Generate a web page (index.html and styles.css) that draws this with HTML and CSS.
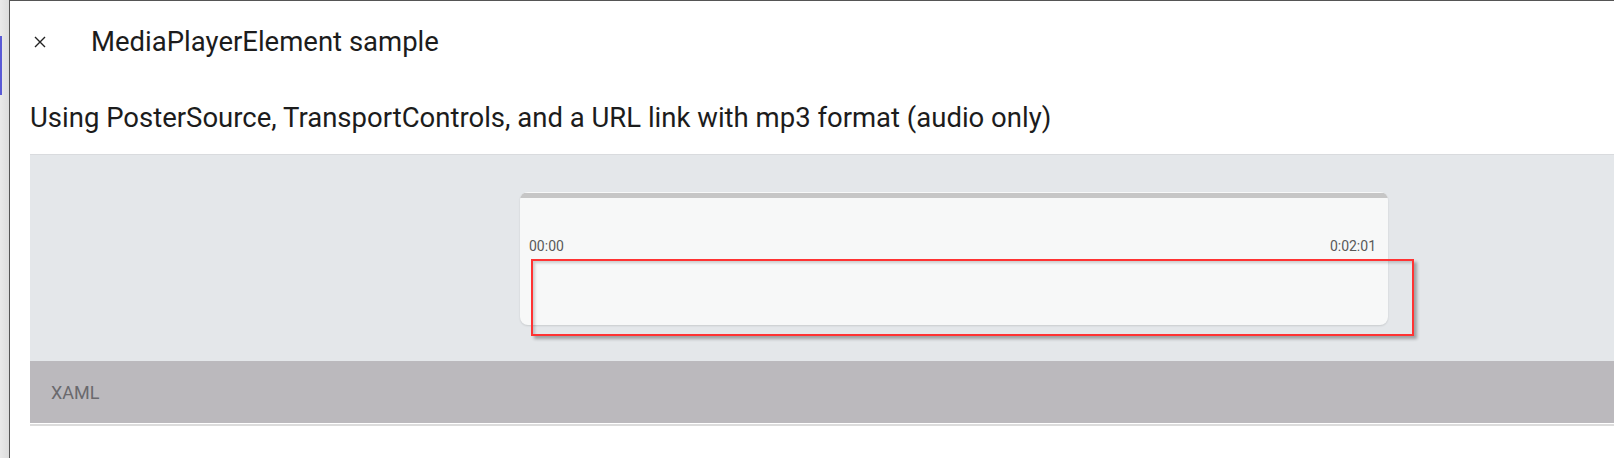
FILE: index.html
```html
<!DOCTYPE html>
<html lang="en">
<head>
<meta charset="utf-8">
<title>MediaPlayerElement sample</title>
<link rel="stylesheet" href="styles.css">
</head>
<body>
<div class="app">
  <aside class="rail"><div class="rail-mark"></div></aside>
  <main class="window">
    <header class="titlebar">
      <button class="close" aria-label="Close">
        <svg width="12" height="12" viewBox="0 0 12 12"><path d="M1 1 L11 11 M11 1 L1 11" stroke="#222" stroke-width="1.4" fill="none"/></svg>
      </button>
      <h1 class="title">MediaPlayerElement sample</h1>
    </header>
    <p class="desc">Using PosterSource, TransportControls, and a URL link with mp3 format (audio only)</p>
    <section class="example">
      <div class="stage">
        <div class="player">
          <div class="progress"></div>
          <div class="times"><span>00:00</span><span>0:02:01</span></div>
        </div>
      </div>
      <div class="code-tab">XAML</div>
    </section>
  </main>
</div>
<div class="highlight"></div>
</body>
</html>
```

FILE: styles.css
```css
html, body {
  margin: 0;
  padding: 0;
  background: #ffffff;
  overflow: hidden;
}
body {
  font-family: Roboto, "Noto Sans", "Liberation Sans", sans-serif;
  color: #1c1c1c;
  width: 1614px;
  height: 458px;
}
.app {
  display: flex;
  height: 458px;
}
.rail {
  width: 9px;
  flex: none;
  background: linear-gradient(to right, #e9e9e9, #dcdcdc);
}
.rail-mark {
  margin-top: 36px;
  width: 2px;
  height: 59px;
  background: #5a5ad6;
}
.window {
  flex: 1;
  min-width: 0;
  border-top: 1px solid #555555;
  border-left: 1px solid #555555;
  background: #ffffff;
  overflow: hidden;
}
.titlebar {
  display: flex;
  align-items: center;
  height: 82px;
}
.close {
  border: 0;
  background: transparent;
  padding: 0;
  margin-left: 24px;
  width: 12px;
  height: 12px;
  display: flex;
}
.title {
  margin: 0 0 0 45px;
  font-size: 27.5px;
  font-weight: 400;
  line-height: 32px;
  color: #1c1c1c;
}
.desc {
  margin: 19px 0 20px 20px;
  font-size: 27.5px;
  line-height: 32px;
  color: #1c1c1c;
}
.example {
  margin-left: 20px;
  width: 1700px;
  padding-bottom: 1px;
  border-bottom: 2px solid #dcdcdc;
}
.stage {
  box-sizing: border-box;
  height: 207px;
  border-top: 1px solid #d9dbde;
  background: #e4e7ea;
  padding: 37px 0 0 490px;
}
.player {
  width: 868px;
  height: 133px;
  background: #f7f8f8;
  border-radius: 8px;
  box-shadow: 0 1px 2px rgba(0, 0, 0, 0.12);
  overflow: hidden;
  padding-top: 1px;
  box-sizing: border-box;
}
.progress {
  height: 5px;
  background: #c6c6c6;
}
.times {
  display: flex;
  justify-content: space-between;
  margin-top: 40px;
  padding: 0 12px 0 9px;
  font-size: 14px;
  line-height: 16px;
  color: #5a5a5a;
}
.code-tab {
  height: 62px;
  background: #bbb9bd;
  display: flex;
  align-items: center;
  padding-left: 21px;
  font-size: 18px;
  color: #6a696d;
}
.highlight {
  position: absolute;
  left: 531px;
  top: 259px;
  width: 883px;
  height: 77px;
  box-sizing: border-box;
  border: 2px solid #ff3333;
  box-shadow: 3px 3px 3px rgba(0, 0, 0, 0.3), inset 3px 3px 3px -1px rgba(0, 0, 0, 0.18);
}
```
